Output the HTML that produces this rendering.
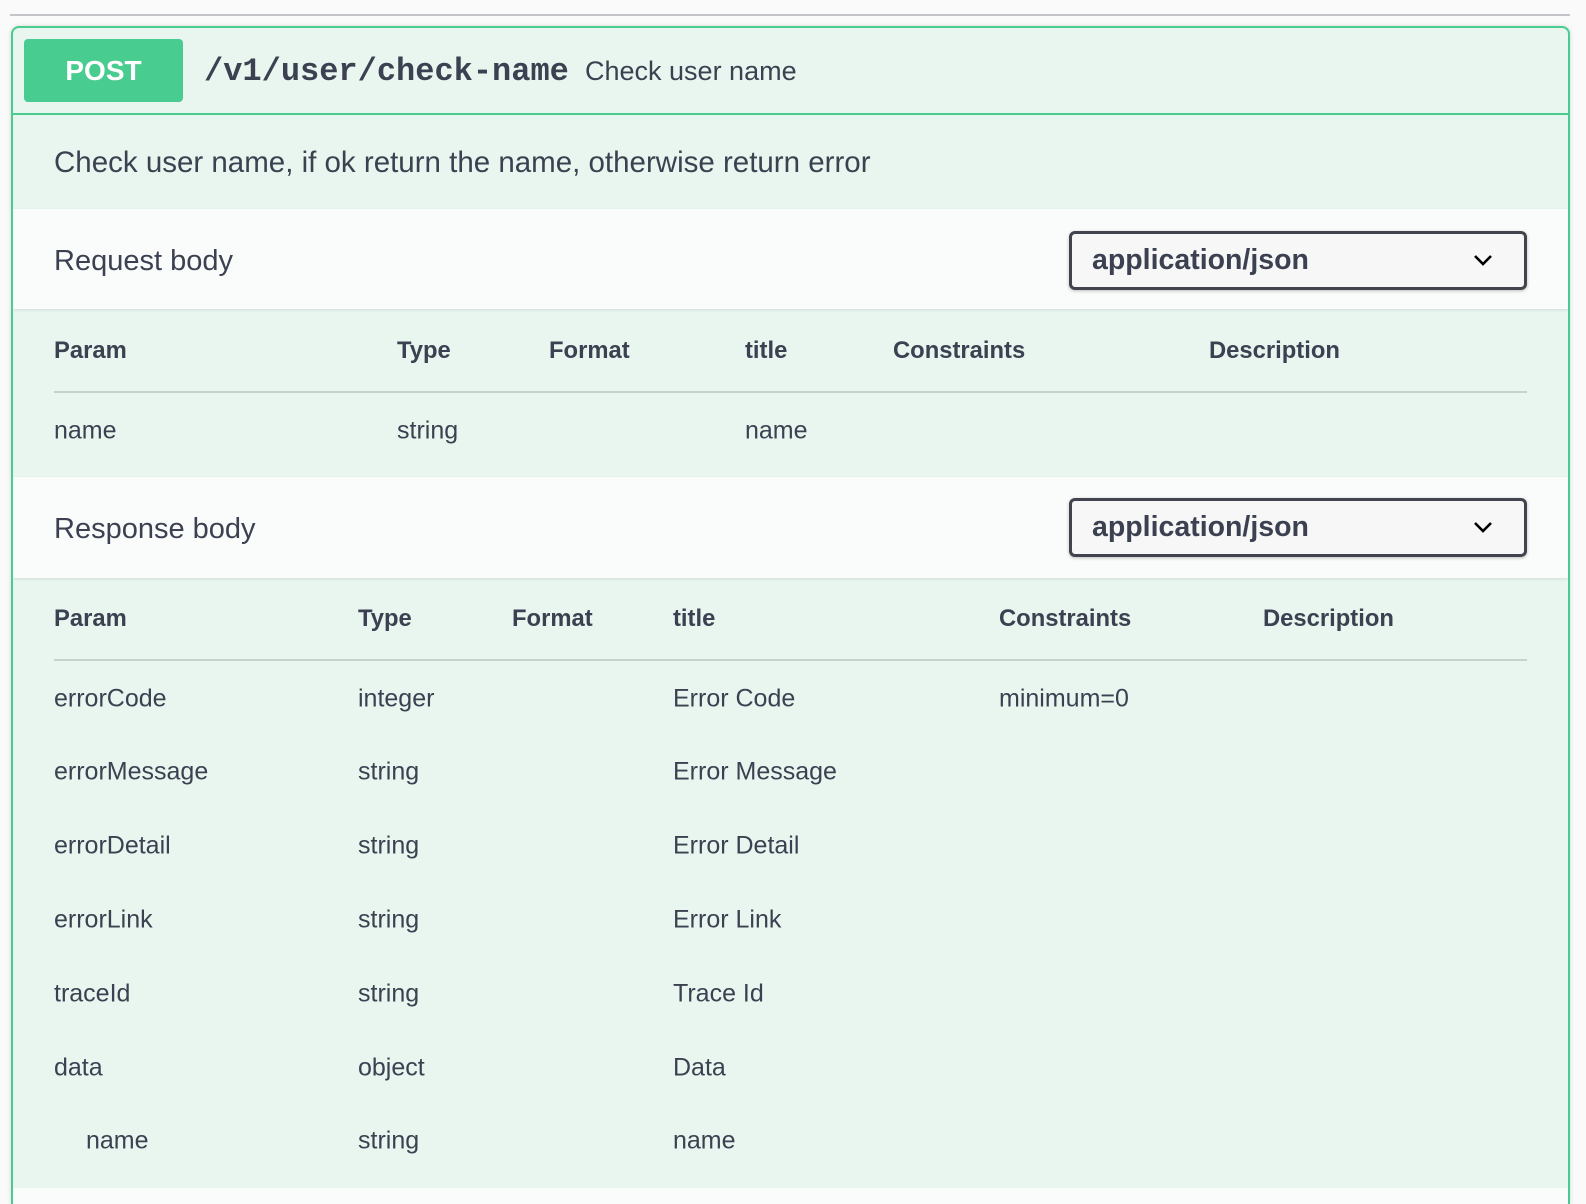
<!DOCTYPE html>
<html><head><meta charset="utf-8"><style>
*{margin:0;padding:0;box-sizing:border-box}
html{width:1586px;height:1204px;overflow:hidden}
body{width:1586px;height:1204px;background:#fafafa;font-family:"Liberation Sans",sans-serif;color:#3b4151;position:relative;overflow:hidden}
.a{position:absolute;white-space:nowrap}
.card{position:absolute;left:11px;top:26px;width:1559px;height:1178px;border:2px solid #49cc90;border-bottom:none;border-radius:8px 8px 0 0;background:#e8f6ef;box-shadow:0 0 4px rgba(0,0,0,.15);overflow:hidden}
.t{font-size:25px;transform:translateY(-50%)}
.b{font-weight:bold;font-size:23.8px}
.sec{position:absolute;left:0;width:100%;background:#fafcfb;box-shadow:0 1px 3px rgba(0,0,0,.1)}
.sel{position:absolute;left:1056px;width:458px;height:59px;border:3px solid #41444e;border-radius:6px;background:#f7f7f7;box-shadow:0 1px 3px rgba(0,0,0,.25);font-size:28.5px;font-weight:bold;line-height:53px;padding-left:20px}
.sel svg{position:absolute;right:30px;top:19px}
</style></head><body>
<div class="a" style="left:10px;top:14px;width:1560px;height:2px;background:#c4c4c8"></div>
<div class="card">
 <div class="a" style="left:0;top:85px;width:100%;height:2px;background:#49cc90"></div>
 <div class="a" style="left:11px;top:11px;width:159px;height:63px;background:#49cc90;border-radius:4px;color:#fff;font-weight:bold;font-size:28px;text-align:center;line-height:63px">POST</div>
 <div class="a" style="left:191px;top:25px;font-family:'Liberation Mono',monospace;font-weight:bold;font-size:32px">/v1/user/check-name</div>
 <div class="a" style="left:572px;top:28px;font-size:27px">Check user name</div>
 <div class="a" style="left:41px;top:118px;font-size:29.5px">Check user name, if ok return the name, otherwise return error</div>
 <div class="sec" style="top:181px;height:100px"></div>
 <div class="a" style="left:41px;top:217px;font-size:29px">Request body</div>
 <div class="sel" style="top:203px">application/json<svg width="22" height="14" viewBox="0 0 22 14"><path d="M3 3l8 8 8-8" fill="none" stroke="#000" stroke-width="2.6"/></svg></div>
 <div class="a t b" style="left:41px;top:323px">Param</div>
 <div class="a t b" style="left:384px;top:323px">Type</div>
 <div class="a t b" style="left:536px;top:323px">Format</div>
 <div class="a t b" style="left:732px;top:323px">title</div>
 <div class="a t b" style="left:880px;top:323px">Constraints</div>
 <div class="a t b" style="left:1196px;top:323px">Description</div>
 <div class="a" style="left:41px;top:363px;width:1473px;height:2px;background:#c9d1cd"></div>
 <div class="a t" style="left:41px;top:403px">name</div>
 <div class="a t" style="left:384px;top:403px">string</div>
 <div class="a t" style="left:732px;top:403px">name</div>
 <div class="sec" style="top:449px;height:101px"></div>
 <div class="a" style="left:41px;top:485px;font-size:29px">Response body</div>
 <div class="sel" style="top:470px">application/json<svg width="22" height="14" viewBox="0 0 22 14"><path d="M3 3l8 8 8-8" fill="none" stroke="#000" stroke-width="2.6"/></svg></div>
 <div class="a t b" style="left:41px;top:591px">Param</div>
 <div class="a t b" style="left:345px;top:591px">Type</div>
 <div class="a t b" style="left:499px;top:591px">Format</div>
 <div class="a t b" style="left:660px;top:591px">title</div>
 <div class="a t b" style="left:986px;top:591px">Constraints</div>
 <div class="a t b" style="left:1250px;top:591px">Description</div>
 <div class="a" style="left:41px;top:631px;width:1473px;height:2px;background:#c9d1cd"></div>
 <div class="a t" style="left:41px;top:671px">errorCode</div><div class="a t" style="left:345px;top:671px">integer</div><div class="a t" style="left:660px;top:671px">Error Code</div><div class="a t" style="left:986px;top:671px">minimum=0</div>
 <div class="a t" style="left:41px;top:744px">errorMessage</div><div class="a t" style="left:345px;top:744px">string</div><div class="a t" style="left:660px;top:744px">Error Message</div>
 <div class="a t" style="left:41px;top:818px">errorDetail</div><div class="a t" style="left:345px;top:818px">string</div><div class="a t" style="left:660px;top:818px">Error Detail</div>
 <div class="a t" style="left:41px;top:892px">errorLink</div><div class="a t" style="left:345px;top:892px">string</div><div class="a t" style="left:660px;top:892px">Error Link</div>
 <div class="a t" style="left:41px;top:966px">traceId</div><div class="a t" style="left:345px;top:966px">string</div><div class="a t" style="left:660px;top:966px">Trace Id</div>
 <div class="a t" style="left:41px;top:1040px">data</div><div class="a t" style="left:345px;top:1040px">object</div><div class="a t" style="left:660px;top:1040px">Data</div>
 <div class="a t" style="left:73px;top:1113px">name</div><div class="a t" style="left:345px;top:1113px">string</div><div class="a t" style="left:660px;top:1113px">name</div>
 <div class="sec" style="top:1160px;height:18px;box-shadow:none"></div>
</div>
</body></html>
